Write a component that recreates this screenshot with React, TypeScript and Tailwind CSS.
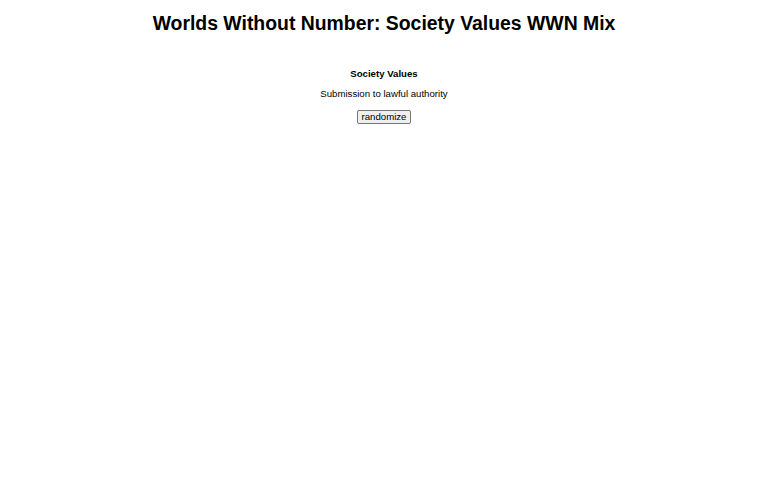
export default function App() {
  return (
    <div className="min-h-[480px] bg-white text-black" style={{ fontFamily: '"Liberation Sans", Arial, sans-serif' }}>
      <h1 className="pt-[11px] text-center text-[19.4px] font-bold leading-[24px]">
        Worlds Without Number: Society Values WWN Mix
      </h1>
      <div className="mt-[33px] flex flex-col items-center text-[9.65px]">
        <div className="font-bold leading-[12px]">Society Values</div>
        <div className="mt-[8px] leading-[12px]">Submission to lawful authority</div>
        <button className="mt-[10px] rounded-[2px] border border-[#767676] bg-[#efefef] px-[4px] text-[9.65px] leading-[12px]">
          randomize
        </button>
      </div>
    </div>
  );
}
